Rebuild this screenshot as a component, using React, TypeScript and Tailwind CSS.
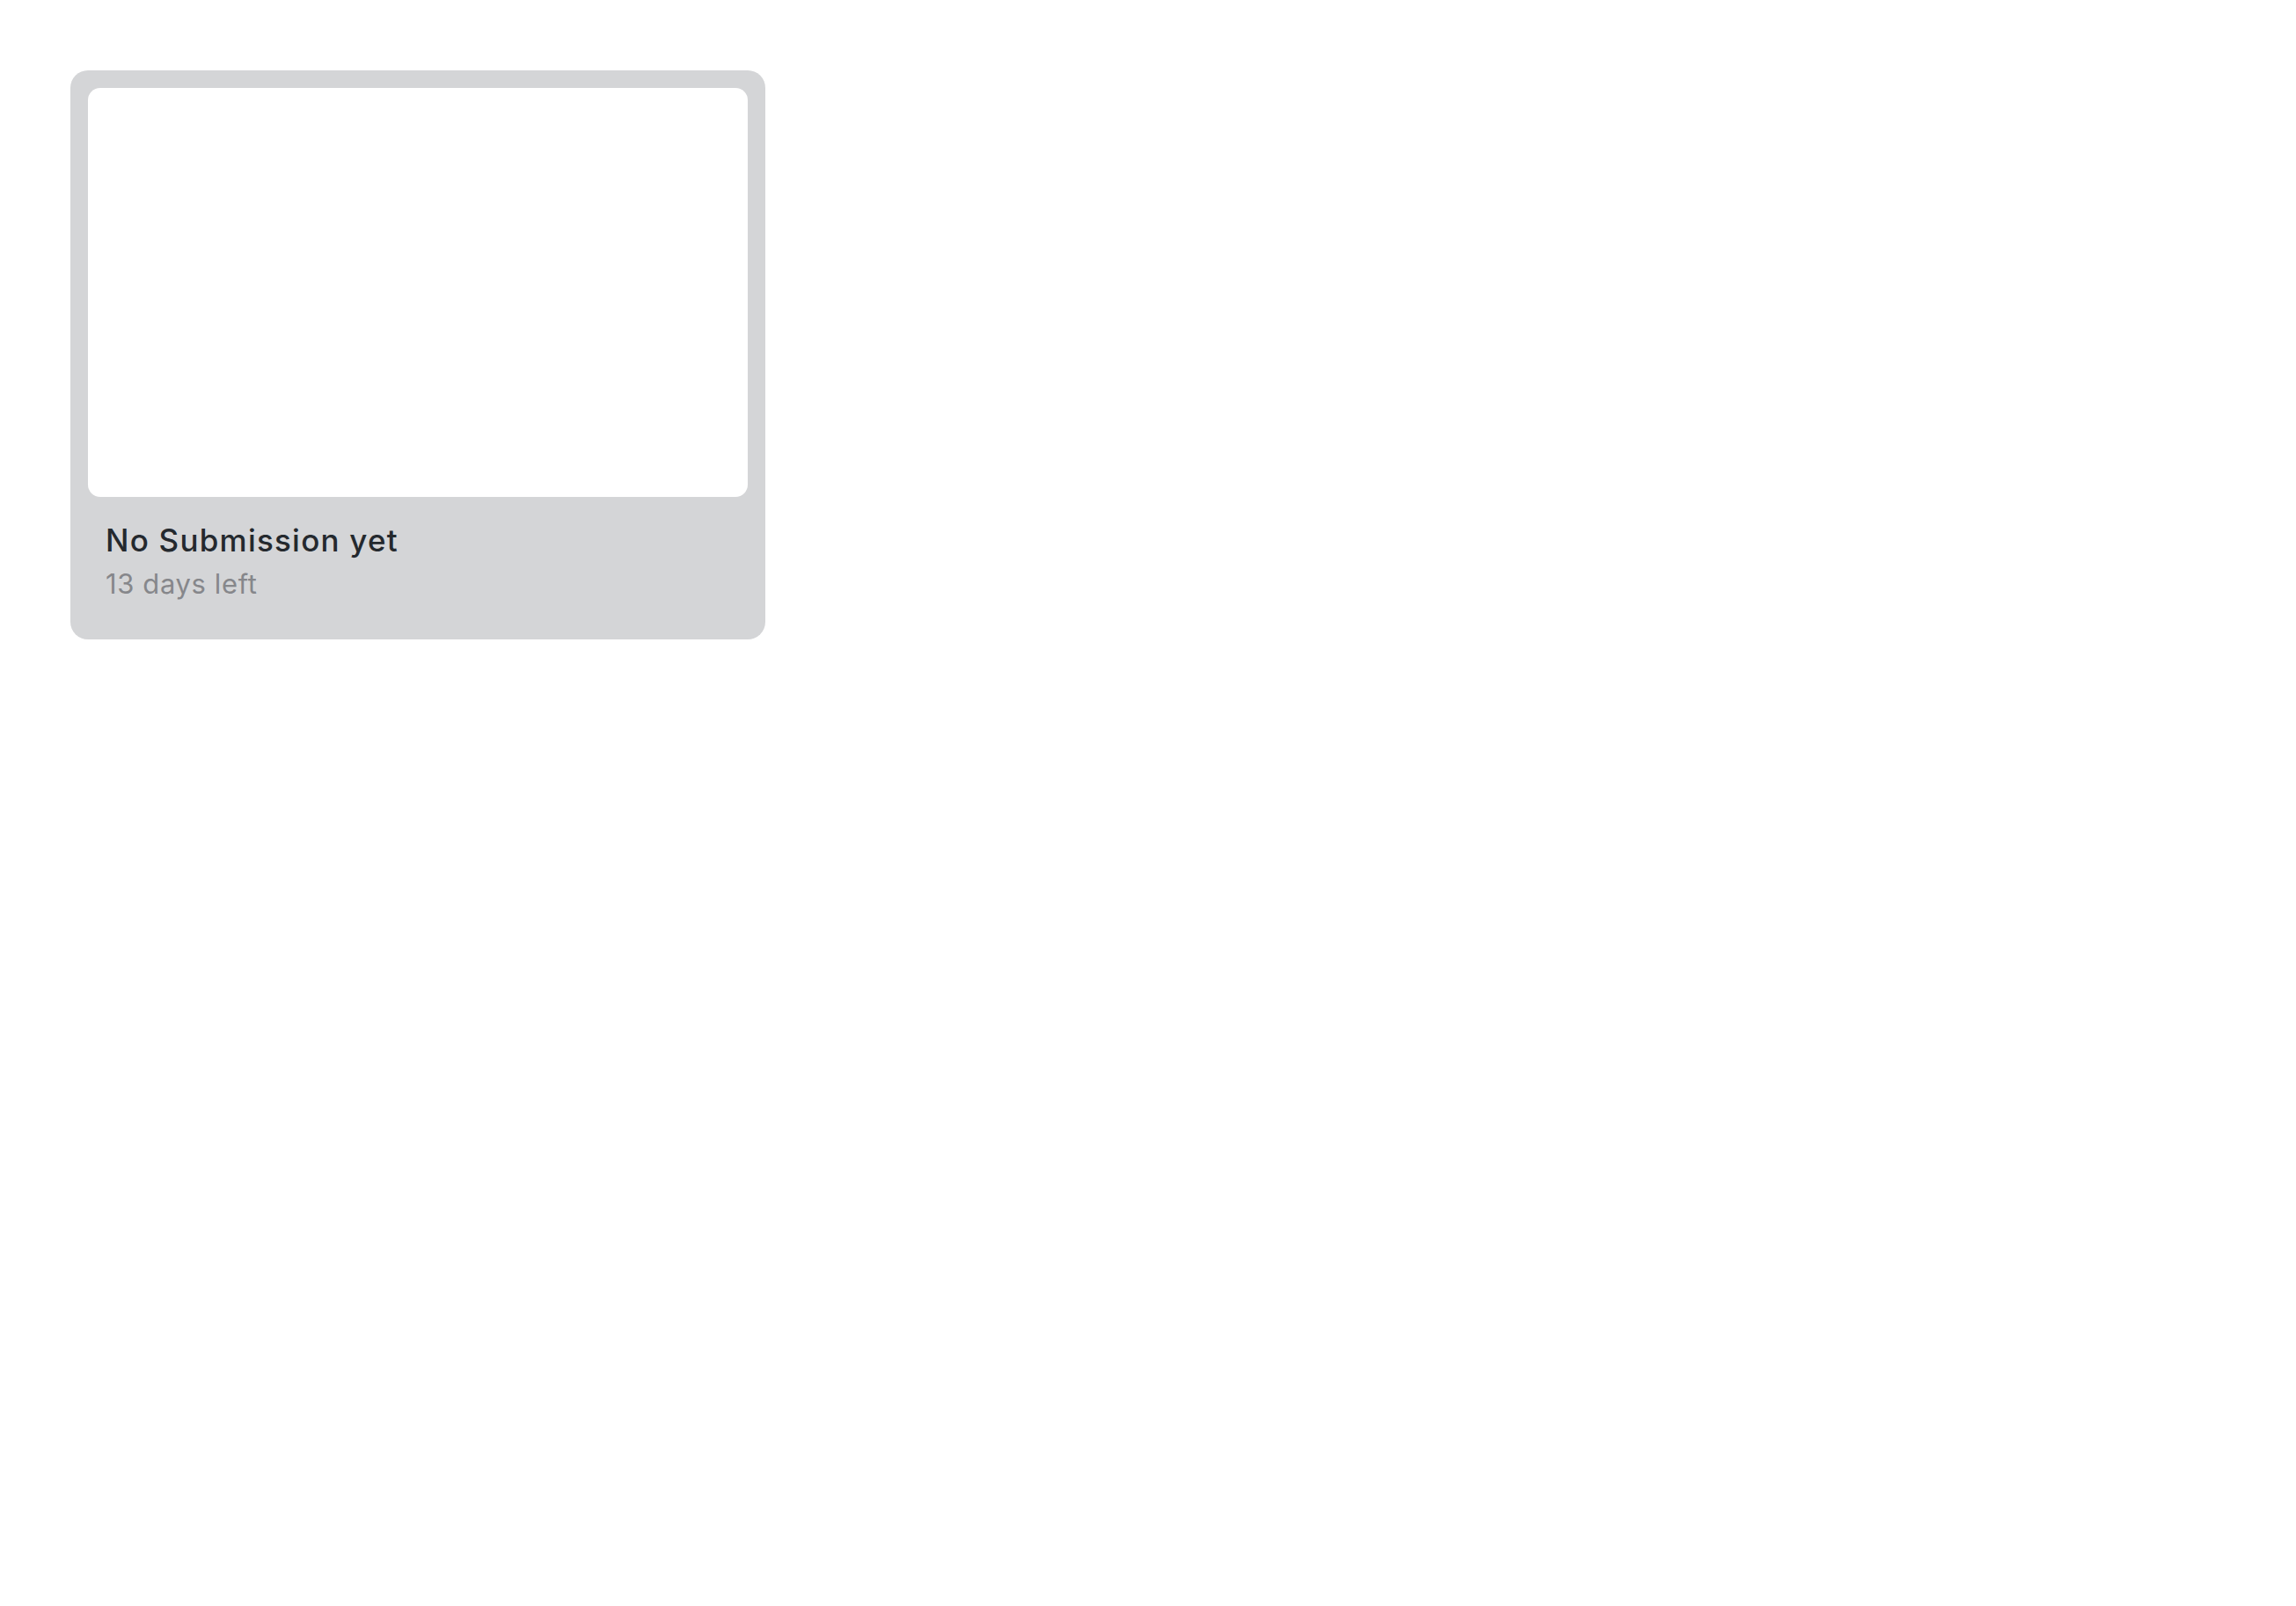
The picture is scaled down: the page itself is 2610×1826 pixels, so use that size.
export default function App() {
  return (
    <div className="min-h-screen bg-white p-20" style={{ fontFamily: "Inter, 'Noto Sans', sans-serif" }}>
      <div className="w-[790px] rounded-[20px] bg-[#d4d5d7] p-5">
        <div className="h-[465px] rounded-[14px] bg-white" />
        <div className="px-5 pt-[26px] pb-[23px]">
          <p className="text-[35px] leading-[46px] font-medium tracking-[0.035em] text-[#24292e]">No Submission yet</p>
          <p className="mt-[7px] text-[31px] leading-[40px] tracking-[0.02em] text-[#86878b]">13 days left</p>
        </div>
      </div>
    </div>
  );
}
